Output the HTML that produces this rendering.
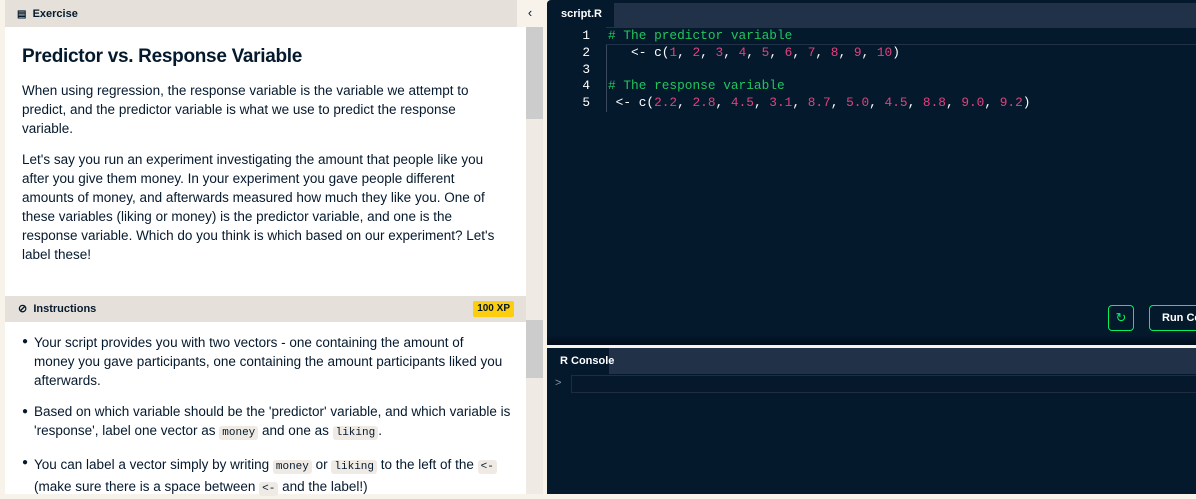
<!DOCTYPE html><html><head><style>
body{margin:0;width:1196px;height:494px;background:#f7f3eb;font-family:"Liberation Sans",sans-serif;position:relative;overflow:hidden}
.a{position:absolute;white-space:nowrap}
.hdr{background:#e5e1da;font-weight:bold;font-size:11px;color:#05192d}
p{margin:0}
.txt{font-size:13.5px;line-height:19px;color:#05192d;white-space:normal}
code{font-family:"Liberation Mono",monospace;font-size:11px;background:#efebe4;padding:1px 3px;border-radius:3px;color:#05192d}
.mono{font-family:"Liberation Mono",monospace;font-size:12.8px;white-space:pre}
.g{color:#22c55e}.n{color:#e0417e}
</style></head><body>
<div class="a" style="left:5px;top:0;width:521px;height:494px;background:#fff"></div>
<div class="a hdr" style="left:5px;top:0;width:512px;height:27px;line-height:28px"><span style="margin-left:12px;font-size:10px">&#9636;</span>&nbsp; Exercise</div>
<div class="a" style="left:517px;top:0;width:26px;height:27px;background:#f7f3eb;text-align:center;line-height:26px;font-size:13px;color:#05192d">&#8249;</div>
<div class="a" style="left:526px;top:27px;width:17px;height:467px;background:#efebe4"></div>
<div class="a" style="left:526px;top:27px;width:17px;height:92px;background:#ccc"></div>
<div class="a" style="left:526px;top:320px;width:17px;height:58px;background:#ccc"></div>
<div class="a" style="left:22px;top:46px;font-size:19px;font-weight:bold;color:#05192d;letter-spacing:-0.3px">Predictor vs. Response Variable</div>
<div class="a txt" style="left:22px;top:81px;width:480px">
<p>When using regression, the response variable is the variable we attempt to predict, and the predictor variable is what we use to predict the response variable.</p>
<p style="margin-top:12px">Let's say you run an experiment investigating the amount that people like you after you give them money. In your experiment you gave people different amounts of money, and afterwards measured how much they like you. One of these variables (liking or money) is the predictor variable, and one is the response variable. Which do you think is which based on our experiment? Let's label these!</p></div>
<div class="a hdr" style="left:5px;top:296px;width:521px;height:26px;line-height:26px"><span style="margin-left:13px">&#8856;</span>&nbsp; Instructions
<span class="a" style="right:12px;top:5px;height:16px;line-height:16px;background:#fcce0d;padding:0 4px;border-radius:2px;font-size:10px">100 XP</span></div>
<div class="a txt" style="left:34px;top:333px;width:478px">
<p>Your script provides you with two vectors - one containing the amount of<br>money you gave participants, one containing the amount participants liked you afterwards.</p>
<p style="margin-top:12px">Based on which variable should be the 'predictor' variable, and which variable is 'response', label one vector as <code>money</code> and one as <code>liking</code>.</p>
<p style="margin-top:12px">You can label a vector simply by writing <code>money</code> or <code>liking</code> to the left of the <code>&lt;-</code> (make sure there is a space between <code>&lt;-</code> and the label!)</p></div>
<div class="a" style="left:22px;top:336px;font-size:10px;color:#05192d">&#9679;</div>
<div class="a" style="left:22px;top:406px;font-size:10px;color:#05192d">&#9679;</div>
<div class="a" style="left:22px;top:457px;font-size:10px;color:#05192d">&#9679;</div>
<div class="a" style="left:547px;top:0;width:649px;height:345px;background:#05192d;border-radius:4px 0 0 4px"></div>
<div class="a" style="left:547px;top:3px;width:649px;height:24px;background:#213147"></div>
<div class="a" style="left:547px;top:3px;width:67px;height:24px;background:#05192d;color:#fff;font-weight:bold;font-size:11px;line-height:22px;text-indent:14px">script.R</div>
<div class="a" style="left:606px;top:27px;width:590px;height:16px;border-top:1px solid #213147;border-bottom:1px solid #213147"></div>
<div class="a mono" style="left:570px;top:28px;line-height:16.8px;color:#fff;width:20px;text-align:right">1
2
3
4
5</div>
<div class="a mono" style="left:608px;top:28px;line-height:16.8px;color:#fff"><span class="g"># The predictor variable</span>
   &lt;- c(<span class="n">1</span>, <span class="n">2</span>, <span class="n">3</span>, <span class="n">4</span>, <span class="n">5</span>, <span class="n">6</span>, <span class="n">7</span>, <span class="n">8</span>, <span class="n">9</span>, <span class="n">10</span>)

<span class="g"># The response variable</span>
 &lt;- c(<span class="n">2.2</span>, <span class="n">2.8</span>, <span class="n">4.5</span>, <span class="n">3.1</span>, <span class="n">8.7</span>, <span class="n">5.0</span>, <span class="n">4.5</span>, <span class="n">8.8</span>, <span class="n">9.0</span>, <span class="n">9.2</span>)</div>
<div class="a" style="left:606px;top:45px;width:1px;height:67px;background:#3a4a5e"></div>
<div class="a" style="left:547px;top:335px;width:649px;height:10px;background:linear-gradient(#05192d,#000c1a)"></div>
<div class="a" style="left:1108px;top:305px;width:24px;height:24px;border:1px solid #03ef62;border-radius:4px;color:#03ef62;text-align:center;line-height:24px;font-size:13px">&#8635;</div>
<div class="a" style="left:1149px;top:305px;width:60px;height:24px;border:1px solid #03ef62;border-radius:4px;color:#fff;font-weight:bold;font-size:11px;line-height:24px;text-indent:12px;overflow:hidden">Run Code</div>
<div class="a" style="left:547px;top:348px;width:649px;height:146px;background:#05192d;border-radius:4px 0 0 0"></div>
<div class="a" style="left:547px;top:348px;width:649px;height:26px;background:#213147"></div>
<div class="a" style="left:547px;top:348px;width:62px;height:26px;background:#05192d;color:#fff;font-weight:bold;font-size:11px;line-height:26px;text-indent:13px">R Console</div>
<div class="a" style="left:555px;top:377px;color:#8a96a3;font-size:11px">&gt;</div>
<div class="a" style="left:571px;top:375px;width:625px;height:16px;border:1px solid #1e2d3f;background:#06192c"></div>
</body></html>
